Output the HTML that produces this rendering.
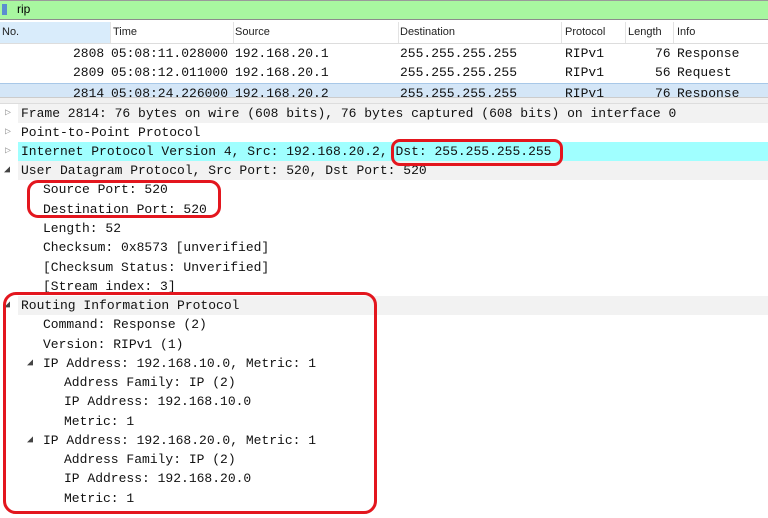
<!DOCTYPE html>
<html><head><style>
body{margin:0;width:768px;height:518px;background:#fff;position:relative;overflow:hidden;font-family:"Liberation Sans",sans-serif}
.filter{position:absolute;left:0;top:0;width:768px;height:18px;background:#a8f7a0;border-bottom:1px solid #8c8c8c;border-top:1px solid #9a9a9a}
.filter .bm{position:absolute;left:2px;top:3px;width:5px;height:11px;background:#5b8dd0}
.filter span{position:absolute;left:17px;top:1px;font-size:12px}
.hdr{position:absolute;left:0;top:22px;width:768px;height:21px;background:#fff;border-bottom:1px solid #ddd;font-size:11px;color:#222}
.hdr div{position:absolute;top:0;height:21px;line-height:21px;border-right:1px solid #e3e3e3;padding-left:2px}
.pl{position:absolute;left:0;font-family:"Liberation Mono",monospace;font-size:13px;height:19px;line-height:19px;white-space:pre;width:768px;color:#111}
.pl span{position:absolute}
.dt{position:absolute;left:0;width:768px;height:19px;line-height:19px;font-family:"Liberation Mono",monospace;font-size:13px;white-space:pre;color:#111}
.g{background:#f2f2f2}
.c{background:#a0ffff}
.tri{position:absolute;font-size:10px;color:#999;top:0}
.box{position:absolute;border:3px solid #e3161e;border-radius:11px}
</style></head><body>
<div class="filter"><div class="bm"></div><span>rip</span></div>
<div class="hdr">
<div style="left:0;width:108px;background:#d9ecfb">No.</div>
<div style="left:111px;width:120px">Time</div>
<div style="left:233px;width:163px">Source</div>
<div style="left:398px;width:161px">Destination</div>
<div style="left:563px;width:60px">Protocol</div>
<div style="left:626px;width:45px">Length</div>
<div style="left:675px;width:90px;border:none">Info</div>
</div>
<div class="pl" style="top:44px"><span style="left:73px">2808</span><span style="left:111px">05:08:11.028000</span><span style="left:235px">192.168.20.1</span><span style="left:400px">255.255.255.255</span><span style="left:565px">RIPv1</span><span style="left:655px">76</span><span style="left:677px">Response</span></div>
<div class="pl" style="top:63px"><span style="left:73px">2809</span><span style="left:111px">05:08:12.011000</span><span style="left:235px">192.168.20.1</span><span style="left:400px">255.255.255.255</span><span style="left:565px">RIPv1</span><span style="left:655px">56</span><span style="left:677px">Request</span></div>
<div class="pl" style="top:83px;height:14px;overflow:hidden;background:#d4e6f7;border-top:1px solid #a8c8e8"><span style="left:73px;top:0">2814</span><span style="left:111px;top:0">05:08:24.226000</span><span style="left:235px;top:0">192.168.20.2</span><span style="left:400px;top:0">255.255.255.255</span><span style="left:565px;top:0">RIPv1</span><span style="left:655px;top:0">76</span><span style="left:677px;top:0">Response</span></div>
<div style="position:absolute;left:0;top:97px;width:768px;height:5px;background:#f0f0f0;border-top:1px solid #ccc;border-bottom:1px solid #ddd"></div>

<div class="dt" style="top:104px"><span class="tri" style="left:5px">▷</span><span style="position:absolute;left:18px;right:0;padding-left:3px" class="g">Frame 2814: 76 bytes on wire (608 bits), 76 bytes captured (608 bits) on interface 0</span></div>
<div class="dt" style="top:123px"><span class="tri" style="left:5px">▷</span><span style="position:absolute;left:21px">Point-to-Point Protocol</span></div>
<div class="dt" style="top:142px"><span class="tri" style="left:5px">▷</span><span style="position:absolute;left:18px;right:0;padding-left:3px" class="c">Internet Protocol Version 4, Src: 192.168.20.2, Dst: 255.255.255.255</span></div>
<div class="dt" style="top:161px"><span class="tri" style="left:4px;color:#444">◢</span><span style="position:absolute;left:18px;right:0;padding-left:3px" class="g">User Datagram Protocol, Src Port: 520, Dst Port: 520</span></div>
<div class="dt" style="top:180px"><span style="position:absolute;left:43px">Source Port: 520</span></div>
<div class="dt" style="top:200px"><span style="position:absolute;left:43px">Destination Port: 520</span></div>
<div class="dt" style="top:219px"><span style="position:absolute;left:43px">Length: 52</span></div>
<div class="dt" style="top:238px"><span style="position:absolute;left:43px">Checksum: 0x8573 [unverified]</span></div>
<div class="dt" style="top:258px"><span style="position:absolute;left:43px">[Checksum Status: Unverified]</span></div>
<div class="dt" style="top:277px"><span style="position:absolute;left:43px">[Stream index: 3]</span></div>
<div class="dt" style="top:296px"><span class="tri" style="left:4px;color:#444">◢</span><span style="position:absolute;left:18px;right:0;padding-left:3px" class="g">Routing Information Protocol</span></div>
<div class="dt" style="top:315px"><span style="position:absolute;left:43px">Command: Response (2)</span></div>
<div class="dt" style="top:335px"><span style="position:absolute;left:43px">Version: RIPv1 (1)</span></div>
<div class="dt" style="top:354px"><span class="tri" style="left:27px;color:#444">◢</span><span style="position:absolute;left:43px">IP Address: 192.168.10.0, Metric: 1</span></div>
<div class="dt" style="top:373px"><span style="position:absolute;left:64px">Address Family: IP (2)</span></div>
<div class="dt" style="top:392px"><span style="position:absolute;left:64px">IP Address: 192.168.10.0</span></div>
<div class="dt" style="top:412px"><span style="position:absolute;left:64px">Metric: 1</span></div>
<div class="dt" style="top:431px"><span class="tri" style="left:27px;color:#444">◢</span><span style="position:absolute;left:43px">IP Address: 192.168.20.0, Metric: 1</span></div>
<div class="dt" style="top:450px"><span style="position:absolute;left:64px">Address Family: IP (2)</span></div>
<div class="dt" style="top:469px"><span style="position:absolute;left:64px">IP Address: 192.168.20.0</span></div>
<div class="dt" style="top:489px"><span style="position:absolute;left:64px">Metric: 1</span></div>

<div class="box" style="left:391px;top:139px;width:166px;height:21px;border-radius:9px"></div>
<div class="box" style="left:27px;top:180px;width:188px;height:32px"></div>
<div class="box" style="left:3px;top:292px;width:368px;height:216px;border-radius:13px"></div>
</body></html>
